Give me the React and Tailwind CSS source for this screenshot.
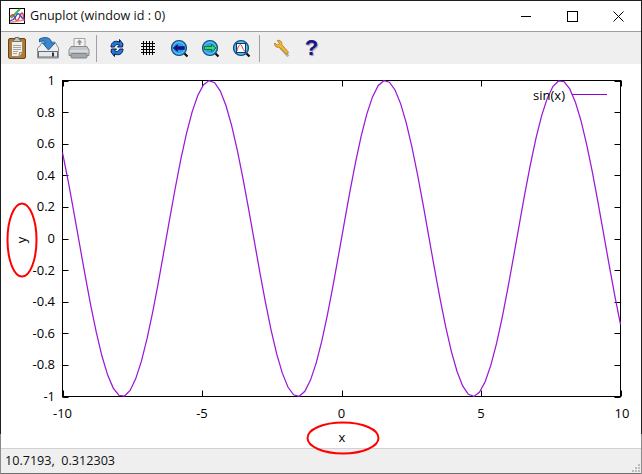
import React from "react";

const left = 62.5;
const right = 620.5;
const top = 80.5;
const bottom = 396.5;

const px = (v) => left + ((v + 10) / 20) * (right - left);
const py = (v) => top + ((1 - v) / 2) * (bottom - top);

// gnuplot default: 100 samples
const samples = Array.from({ length: 100 }, (_, i) => {
  const x = -10 + (i * 20) / 99;
  return `${px(x).toFixed(2)},${py(Math.sin(x)).toFixed(2)}`;
}).join(" ");

const yTicks = [
  ["1", 1],
  ["0.8", 0.8],
  ["0.6", 0.6],
  ["0.4", 0.4],
  ["0.2", 0.2],
  ["0", 0],
  ["-0.2", -0.2],
  ["-0.4", -0.4],
  ["-0.6", -0.6],
  ["-0.8", -0.8],
  ["-1", -1],
];
const xTicks = [-10, -5, 0, 5, 10];

const AppIcon = () => (
  <svg width="16" height="16" viewBox="0 0 16 16" className="shrink-0">
    <rect x="0.5" y="0.5" width="15" height="15" fill="#fff" stroke="#000" />
    <path d="M2 10 L6 6 L11 1" fill="none" stroke="#35c24a" strokeWidth="2" />
    <path d="M1 9 Q4 4 6 10 T11 8 T15 13" fill="none" stroke="#e0393f" strokeWidth="1.4" />
    <path d="M1 13 Q5 12 7 8 T11 7 T15 12" fill="none" stroke="#3a4fd8" strokeWidth="1.4" />
    <path d="M1 14.5 L15 12" stroke="#e88" fill="none" strokeWidth="1.4" />
  </svg>
);

const ClipboardIcon = () => (
  <svg width="24" height="24" viewBox="0 0 24 24">
    <rect x="3.5" y="2.5" width="17" height="20" rx="1.5" fill="#b4772f" stroke="#6d4216" />
    <path d="M6.5 5.5 H17.5 V16.5 L14 20.5 H6.5 Z" fill="#f4efe2" stroke="#8b8b80" />
    <path d="M14 20.5 L14.5 16.5 H17.5" fill="#d9d5c6" stroke="#8b8b80" />
    <path d="M8 9.5 H16 M8 11.5 H16 M8 13.5 H16 M8 15.5 H13 M8 17.5 H12" stroke="#a5a5a0" />
    <path d="M8.5 5.5 V3.5 H10 V1.5 H14 V3.5 H15.5 V5.5 Z" fill="#c6c6c2" stroke="#6f6f6c" />
  </svg>
);

const SaveIcon = () => (
  <svg width="24" height="24" viewBox="0 0 24 24">
    <path d="M4 10 L6 6 H19 L22.5 12 V22 H1.5 V12 Z" fill="#eceef0" stroke="#8b9198" />
    <rect x="2.5" y="15.5" width="19" height="5.5" fill="#e6e8ea" stroke="#666c72" />
    <rect x="16" y="16.5" width="2" height="4" fill="#30343a" />
    <path
      d="M3.5 3 C9 0.5 15 1 15.5 7 H19 L12.5 14 L6.5 7 H10 C10 5 7 4 3.5 6 Z"
      fill="#3b86cc"
      stroke="#1d5f9f"
    />
  </svg>
);

const PrintIcon = () => (
  <svg width="24" height="24" viewBox="0 0 24 24">
    <path d="M7 2.5 H18 V11 H7 Z" fill="#f3f3f3" stroke="#a2a2a2" />
    <path d="M12.5 3.5 L15.5 6.5 H13.5 V9 H11.5 V6.5 H9.5 Z" fill="#8e9497" />
    <path d="M4 10.5 H20 L22 14 V19.5 H2 V14 Z" fill="#c3c7ca" stroke="#878b8e" />
    <path d="M2.5 15 H21.5" stroke="#eceeef" />
    <rect x="4" y="17.5" width="16" height="4.5" rx="1" fill="#a4a8ab" stroke="#80848a" />
  </svg>
);

const RefreshIcon = () => (
  <svg width="24" height="24" viewBox="0 0 24 24">
    <path
      d="M6 11 C6 7 9 4.5 13 5.5 L14.5 6.2 V3.5 L18 8 L17.5 11 H12.5 L14.5 9 C12 7.5 10 9 9.5 11 Z"
      fill="#1f7ae6"
      stroke="#071a44"
    />
    <path
      d="M18 13 C18 17 15 19.5 11 18.5 L9.5 17.8 V20.5 L6 16 L6.5 13 H11.5 L9.5 15 C12 16.5 14 15 14.5 13 Z"
      fill="#1f7ae6"
      stroke="#071a44"
    />
  </svg>
);

const GridIcon = () => (
  <svg width="24" height="24" viewBox="0 0 24 24">
    <path
      d="M7.5 5 V19 M10.5 5 V19 M13.5 5 V19 M16.5 5 V19 M5 7.5 H19 M5 10.5 H19 M5 13.5 H19 M5 16.5 H19"
      stroke="#000"
    />
  </svg>
);

const ZoomBase = ({ children }) => (
  <svg width="24" height="24" viewBox="0 0 24 24">
    <path d="M17 17 L20.5 20.5" stroke="#111" strokeWidth="2.2" />
    <circle cx="12" cy="12" r="7.5" fill="#2f9fe8" stroke="#0f4e78" strokeWidth="1.2" />
    <circle cx="12" cy="12" r="5.8" fill="none" stroke="#6cc4f5" />
    {children}
  </svg>
);

const ZoomLeftIcon = () => (
  <ZoomBase>
    <path d="M6 12 L10.5 8.5 V10.5 H17.5 V13.5 H10.5 V15.5 Z" fill="#12128f" stroke="#0a0a60" strokeWidth="0.5" />
  </ZoomBase>
);

const ZoomRightIcon = () => (
  <ZoomBase>
    <path d="M18 12 L13.5 8.5 V10.5 H6.5 V13.5 H13.5 V15.5 Z" fill="#2fe05a" stroke="#0b4d1e" strokeWidth="0.7" />
  </ZoomBase>
);

const ZoomAutoIcon = () => (
  <ZoomBase>
    <rect x="7.5" y="7.5" width="9" height="9" fill="#fff" stroke="#0f3a5c" />
    <path d="M8 15 C9.5 8 12 7.5 13 10.5 C14 13 15 15 16 15.5" fill="none" stroke="#d8324a" />
  </ZoomBase>
);

const WrenchIcon = () => (
  <svg width="20" height="20" viewBox="0 0 24 24">
    <path d="M11 11 L20 21 L21 22" stroke="#9a9a9a" strokeWidth="3.5" fill="none" opacity="0.7" />
    <path
      d="M4.5 6 L8 8.5 L10 6.5 L7.5 3 C10.5 2 13.5 4 13 8 L20.5 16.5 C21.5 18 19.5 20 18 19 L10 11 C6.5 12 3.5 9.5 4.5 6 Z"
      fill="#f2b632"
      stroke="#8f6412"
      strokeWidth="0.8"
    />
  </svg>
);

const ToolButton = ({ children }) => (
  <div className="flex h-full w-[31px] shrink-0 items-center justify-center">{children}</div>
);

const ToolSeparator = ({ className }) => (
  <div className={`flex h-full shrink-0 items-center ${className}`}>
    <div className="h-[27px] w-px bg-[#a0a0a0]" />
  </div>
);

const App = () => {
  return (
    <div className="relative flex h-[474px] w-[642px] flex-col border-x border-t border-[#1f1f1f] bg-white font-['Open_Sans',sans-serif] text-[12.6px] text-black">
      {/* title bar */}
      <div className="flex h-[31px] shrink-0 items-center border-b border-[#a0a0a0] bg-white pl-[8px]">
        <AppIcon />
        <span className="ml-[5px] whitespace-pre text-[#111]">Gnuplot (window id : 0)</span>
        <div className="ml-auto flex h-full">
          <div className="flex w-[46px] items-center justify-center">
            <svg width="10" height="10" viewBox="0 0 10 10">
              <path d="M0 5.5 H10" stroke="#000" />
            </svg>
          </div>
          <div className="flex w-[46px] items-center justify-center">
            <svg width="11" height="11" viewBox="0 0 11 11">
              <rect x="0.5" y="0.5" width="10" height="10" fill="none" stroke="#000" />
            </svg>
          </div>
          <div className="flex w-[46px] items-center justify-center">
            <svg width="11" height="11" viewBox="0 0 11 11">
              <path d="M0.5 0.5 L10.5 10.5 M10.5 0.5 L0.5 10.5" stroke="#000" />
            </svg>
          </div>
        </div>
      </div>

      {/* toolbar */}
      <div className="flex h-[32px] shrink-0 items-center bg-[#efefef]">
        <ToolButton><ClipboardIcon /></ToolButton>
        <ToolButton><SaveIcon /></ToolButton>
        <ToolButton><PrintIcon /></ToolButton>
        <ToolSeparator className="w-[7px] pl-[2px]" />
        <ToolButton><RefreshIcon /></ToolButton>
        <ToolButton><GridIcon /></ToolButton>
        <ToolButton><ZoomLeftIcon /></ToolButton>
        <ToolButton><ZoomRightIcon /></ToolButton>
        <ToolButton><ZoomAutoIcon /></ToolButton>
        <ToolSeparator className="w-[9px] pl-[3px]" />
        <ToolButton><WrenchIcon /></ToolButton>
        <ToolButton>
          <span className="font-['Liberation_Sans',sans-serif] text-[22px] leading-none font-bold text-[#14148c] [text-shadow:1px_1px_1px_#999]">
            ?
          </span>
        </ToolButton>
      </div>

      {/* plot */}
      <div className="min-h-0 flex-1 bg-white">
        <svg width="640" height="384" viewBox="1 64 640 384" className="block">
          <rect x={left} y={top} width={right - left} height={bottom - top} fill="none" stroke="#000" />
          {yTicks.map(([label, v]) => (
            <g key={label}>
              <path
                d={`M${left} ${Math.round(py(v)) + 0.5} h6 M${right} ${Math.round(py(v)) + 0.5} h-6`}
                stroke="#000"
              />
              <text x="55" y={py(v) + 4.5} textAnchor="end" fontSize="13" fill="#000">
                {label}
              </text>
            </g>
          ))}
          {xTicks.map((v) => (
            <g key={v}>
              <path d={`M${Math.round(px(v)) + 0.5} ${bottom} v-6 M${Math.round(px(v)) + 0.5} ${top} v6`} stroke="#000" />
              <text x={px(v) + (v === 10 ? 1.5 : 0)} y="417.5" textAnchor="middle" fontSize="13" fill="#000">
                {v}
              </text>
            </g>
          ))}
          <text x="342" y="442" textAnchor="middle" fontSize="13" fill="#000">
            x
          </text>
          <text transform="translate(25.5 240) rotate(-90)" textAnchor="middle" fontSize="13" fill="#000">
            y
          </text>
          <polyline points={samples} fill="none" stroke="#9a18d8" strokeWidth="1.25" />
          <text x="565" y="100" textAnchor="end" fontSize="13" fill="#000">
            sin(x)
          </text>
          <path d="M572 94.5 H607" stroke="#9400d3" />
        </svg>
      </div>

      {/* status bar */}
      <div className="relative flex h-[26px] shrink-0 items-center border-t border-b border-t-[#d2d2d2] border-b-[#6e6e6e] bg-[#efefef] pl-[4px] whitespace-pre text-[#111]">
        {"10.7193,  0.312303"}
        <svg width="10" height="10" viewBox="0 0 10 10" className="absolute right-0 bottom-0">
          <path d="M7 1h2v2H7zM4 4h2v2H4zM7 4h2v2H7zM1 7h2v2H1zM4 7h2v2H4zM7 7h2v2H7z" fill="#bdbdbd" />
        </svg>
      </div>

      {/* window frame turns grey near the bottom corners */}
      <div className="absolute bottom-0 left-[-1px] h-[40px] w-px bg-[#8a8a8a]" />
      <div className="absolute right-[-1px] bottom-0 h-[40px] w-px bg-[#8a8a8a]" />

      {/* red annotations drawn over the window */}
      <svg width="642" height="474" viewBox="0 0 642 474" className="pointer-events-none absolute top-[-1px] left-[-1px]">
        <ellipse cx="22" cy="240" rx="14.5" ry="36.5" fill="none" stroke="#f00" strokeWidth="2" />
        <ellipse cx="343" cy="438" rx="35.5" ry="15.5" fill="none" stroke="#f00" strokeWidth="2" />
      </svg>
    </div>
  );
};

export default App;
